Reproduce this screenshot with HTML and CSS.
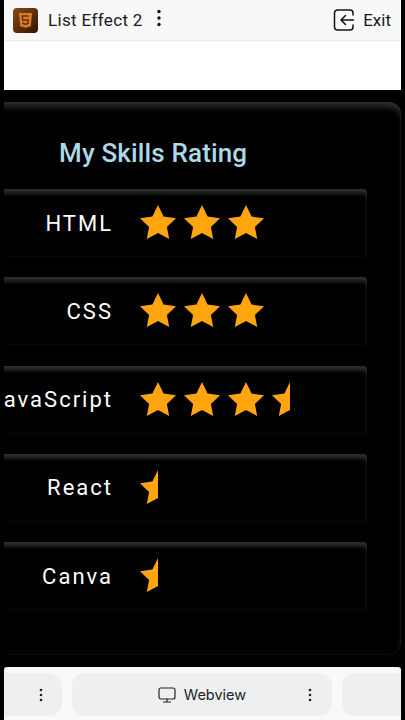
FILE: index.html
```html
<!DOCTYPE html>
<html lang="en">
<head>
<meta charset="utf-8">
<title>List Effect 2</title>
<link rel="stylesheet" href="styles.css">
</head>
<body>
<svg class="defs" width="0" height="0" aria-hidden="true">
  <defs>
    <polygon id="star" points="18,0 23.6,11.6 36,13.2 26.9,22 29.2,34 18,28 6.8,34 9.1,22 0,13.2 12.4,11.6"/>
    <polygon id="half" points="18,0 18,28 6.8,34 9.1,22 0,13.2 12.4,11.6"/>
  </defs>
</svg>
<div class="frame">
  <header class="topbar">
    <svg class="logo" viewBox="0 0 25 25" aria-hidden="true">
      <defs>
        <linearGradient id="tile" x1="0" y1="0" x2="1" y2="1">
          <stop offset="0" stop-color="#8a4a14"/>
          <stop offset="1" stop-color="#2e1606"/>
        </linearGradient>
      </defs>
      <rect width="25" height="25" rx="4" fill="url(#tile)"/>
      <path d="M6 5h13l-1.2 13.2-5.3 1.6-5.3-1.6z" fill="#d97a2c"/>
      <path d="M15.8 8H9.3l.3 4h5.8l-.3 3.4-2.6.8-2.6-.8-.1-1.3" fill="none" stroke="#5d2f0d" stroke-width="1.4"/>
    </svg>
    <span class="app-title">List Effect 2</span>
    <svg class="dots" viewBox="0 0 4 18" aria-hidden="true">
      <circle cx="2" cy="2.5" r="1.7"/><circle cx="2" cy="9" r="1.7"/><circle cx="2" cy="15.5" r="1.7"/>
    </svg>
    <span class="exit">
      <svg class="exit-icon" viewBox="0 0 22 22" aria-hidden="true">
        <path d="M20 6V4a3 3 0 0 0-3-3H4.500a3 3 0 0 0-3 3v14a3 3 0 0 0 3 3H17a3 3 0 0 0 3-3v-2"/>
        <path d="M20.500 11H8M12.500 6.500 8 11l4.500 4.500"/>
      </svg>
      Exit
    </span>
  </header>
  <div class="blank"></div>
  <main class="stage">
    <section class="card">
      <h1 class="card-title">My Skills Rating</h1>
      <div class="rows">
        <div class="row">
          <span class="label">HTML</span>
          <span class="stars">
            <svg class="star" viewBox="0 0 36 34"><use href="#star"/></svg>
            <svg class="star" viewBox="0 0 36 34"><use href="#star"/></svg>
            <svg class="star" viewBox="0 0 36 34"><use href="#star"/></svg>
          </span>
        </div>
        <div class="row">
          <span class="label">CSS</span>
          <span class="stars">
            <svg class="star" viewBox="0 0 36 34"><use href="#star"/></svg>
            <svg class="star" viewBox="0 0 36 34"><use href="#star"/></svg>
            <svg class="star" viewBox="0 0 36 34"><use href="#star"/></svg>
          </span>
        </div>
        <div class="row">
          <span class="label">JavaScript</span>
          <span class="stars">
            <svg class="star" viewBox="0 0 36 34"><use href="#star"/></svg>
            <svg class="star" viewBox="0 0 36 34"><use href="#star"/></svg>
            <svg class="star" viewBox="0 0 36 34"><use href="#star"/></svg>
            <svg class="star" viewBox="0 0 36 34"><use href="#half"/></svg>
          </span>
        </div>
        <div class="row">
          <span class="label">React</span>
          <span class="stars">
            <svg class="star" viewBox="0 0 36 34"><use href="#half"/></svg>
          </span>
        </div>
        <div class="row">
          <span class="label">Canva</span>
          <span class="stars">
            <svg class="star" viewBox="0 0 36 34"><use href="#half"/></svg>
          </span>
        </div>
      </div>
    </section>
  </main>
  <footer class="tabs">
    <div class="tab tab-left">
      <svg class="tab-dots" viewBox="0 0 4 14" aria-hidden="true">
        <circle cx="2" cy="2" r="1.300"/><circle cx="2" cy="7" r="1.300"/><circle cx="2" cy="12" r="1.300"/>
      </svg>
    </div>
    <div class="tab tab-main">
      <span class="tab-label">
        <svg class="monitor" viewBox="0 0 18 16" aria-hidden="true">
          <rect x="1" y="1" width="16" height="11" rx="2"/>
          <path d="M9 12v3M5.500 15h7"/>
        </svg>
        Webview
      </span>
      <svg class="tab-dots tab-dots-end" viewBox="0 0 4 14" aria-hidden="true">
        <circle cx="2" cy="2" r="1.300"/><circle cx="2" cy="7" r="1.300"/><circle cx="2" cy="12" r="1.300"/>
      </svg>
    </div>
    <div class="tab tab-right"></div>
  </footer>
</div>
</body>
</html>
```
FILE: styles.css
```css
* { box-sizing: border-box; }

html, body {
  margin: 0;
  height: 100%;
  background: #000;
  overflow: hidden;
}

.defs { position: absolute; }

.frame {
  width: 405px;
  height: 720px;
  padding: 0 4px;
  display: flex;
  flex-direction: column;
  font-family: Roboto, "Liberation Sans", sans-serif;
}

.topbar {
  height: 41px;
  flex: none;
  display: flex;
  align-items: center;
  padding: 0 10px 1px 9px;
  background: #f8f8f8;
  border-bottom: 1px solid #ececec;
  color: #1a1a1a;
}

.logo { width: 25px; height: 25px; flex: none; margin-top: 1px; }

.app-title {
  margin-left: 10px;
  font-size: 17px;
  letter-spacing: .35px;
}

.dots { width: 4px; height: 18px; margin-left: 14px; fill: #111; margin-top: -3px; }

.exit {
  margin-left: auto;
  display: flex;
  align-items: center;
  gap: 8px;
  font-size: 17px;
}

.exit-icon {
  width: 22px;
  height: 22px;
  fill: none;
  stroke: #111;
  stroke-width: 1.500;
  stroke-linecap: round;
  stroke-linejoin: round;
}

.blank { height: 49px; flex: none; background: #fff; }

.stage {
  flex: 1;
  min-height: 0;
  overflow: hidden;
  padding-top: 12px;
  background: #000;
}

.card {
  height: 553px;
  margin-left: -20px;
  border-radius: 12px;
  padding-top: 34px;
  box-shadow:
    inset 0 7px 6px -2px rgba(255, 255, 255, .18),
    inset -1px -1px 1px rgba(255, 255, 255, .05);
}

.card-title {
  margin: 0 0 19px 75px;
  font-size: 26px;
  line-height: 34px;
  font-weight: 500;
  letter-spacing: .15px;
  color: #add8e6;
}

.rows {
  display: flex;
  flex-direction: column;
  gap: 20.250px;
  width: 383px;
}

.row {
  height: 68px;
  display: flex;
  align-items: center;
  border-radius: 4px;
  box-shadow:
    inset 0 6px 5px -2px rgba(255, 255, 255, .2),
    inset -1px -1px 1px rgba(255, 255, 255, .04);
}

.label {
  width: 129px;
  flex: none;
  text-align: right;
  white-space: nowrap;
  direction: rtl;
  font-size: 22px;
  letter-spacing: 2px;
  color: #fff;
}

.stars {
  margin: 0 0 2px 27px;
  display: flex;
  gap: 8px;
}

.star { width: 36px; height: 34px; fill: #ffa50f; display: block; }

.tabs {
  height: 53px;
  flex: none;
  display: flex;
  gap: 10px;
  padding: 6px 0 4px;
  background: #f9f9f9;
  border-radius: 3px 3px 0 0;
  overflow: hidden;
}

.tab {
  background: #eeeff0;
  border-radius: 13px;
  display: flex;
  align-items: center;
  position: relative;
}

.tab-left {
  width: 58px;
  flex: none;
  justify-content: flex-end;
  padding-right: 19px;
  border-radius: 0 13px 13px 0;
}

.tab-main {
  width: 260px;
  flex: none;
  justify-content: center;
  color: #222;
}

.tab-right { flex: 1; border-radius: 13px 0 0 13px; }

.tab-label {
  display: flex;
  align-items: center;
  gap: 8px;
  font-family: Inter, "Liberation Sans", sans-serif;
  font-size: 14.500px;
}

.monitor {
  width: 18px;
  height: 16px;
  fill: none;
  stroke: #222;
  stroke-width: 1.200;
  stroke-linecap: round;
}

.tab-dots { width: 4px; height: 14px; fill: #222; }

.tab-dots-end { position: absolute; right: 20px; top: 15px; }
```
